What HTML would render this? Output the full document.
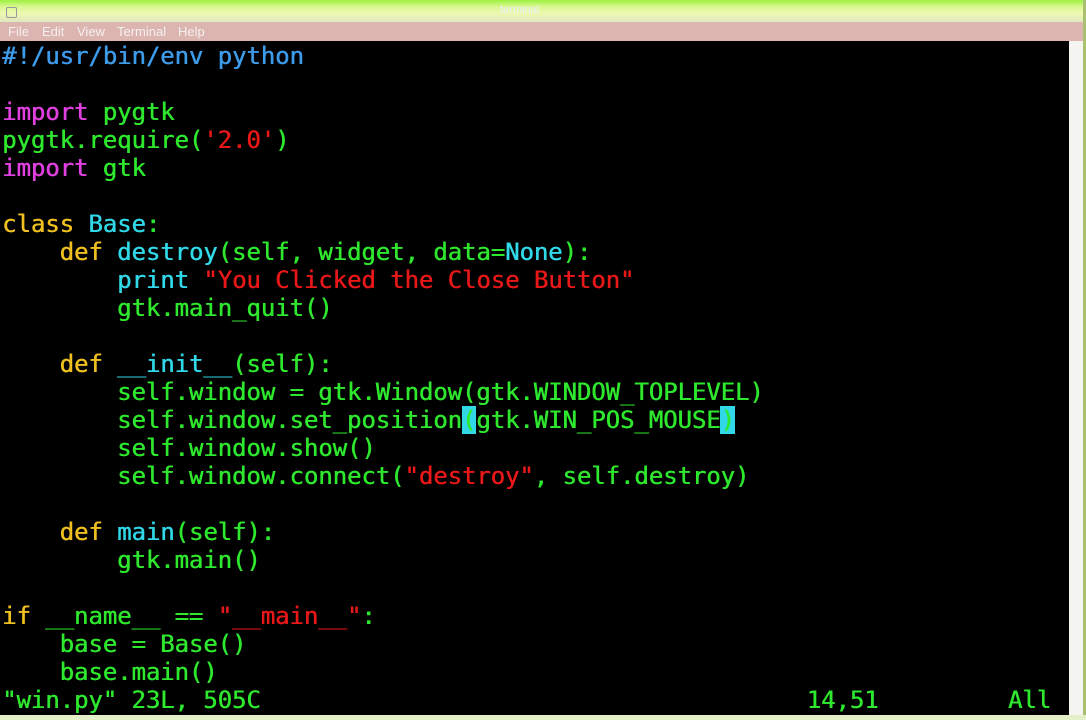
<!DOCTYPE html>
<html><head><meta charset="utf-8"><style>
html,body{margin:0;padding:0;width:1086px;height:720px;overflow:hidden;background:#e8f0d8}
#title{position:absolute;left:0;top:0;width:1086px;height:22px;background:linear-gradient(#9cf040 0,#d8f890 30%,#eef8b0 60%,#e0e8c0 100%)}
#menu{position:absolute;left:0;top:22px;width:1086px;height:19px;background:#dcb4b0;font:13px "Liberation Sans",sans-serif;color:#f4f0f0}
#menu span{position:absolute;top:2px}
#term{position:absolute;left:0;top:41px;width:1069px;height:674px;background:#000}
#sb{position:absolute;left:1069px;top:41px;width:14px;height:674px;background:#f4f4f0}
#rb{position:absolute;left:1083px;top:0;width:3px;height:720px;background:#a8c070}
#bot{position:absolute;left:0;top:715px;width:1086px;height:5px;background:#e4f0c8}
pre{margin:0;position:absolute;left:2px;top:42px;font:24px/28px "DejaVu Sans Mono","Liberation Mono",monospace;color:#2ee82e;letter-spacing:-0.08px;text-shadow:0.5px 0 0 currentColor}
.c{color:#3d9be9}.m{color:#e040e0}.y{color:#f0c020}.b{color:#30d8e8}.r{color:#e81818}
.hl{background:#30d8e8;color:#2ee82e}
</style></head><body>
<div id="title"><div style="position:absolute;left:6px;top:7px;width:9px;height:9px;border:1px solid #999;border-radius:2px"></div><div style="position:absolute;left:500px;top:4px;font:11px 'Liberation Sans',sans-serif;color:#eef">terminal</div></div>
<div id="menu"><span style="left:8px">File</span><span style="left:42px">Edit</span><span style="left:77px">View</span><span style="left:117px">Terminal</span><span style="left:178px">Help</span></div>
<div id="term"></div><div id="sb"></div><div id="rb"></div><div id="bot"></div>
<pre><span class="c">#!/usr/bin/env python</span>

<span class="m">import</span> pygtk
pygtk.require(<span class="r">'2.0'</span>)
<span class="m">import</span> gtk

<span class="y">class</span> <span class="b">Base</span>:
    <span class="y">def</span> <span class="b">destroy</span>(self, widget, data=<span class="b">None</span>):
        <span class="b">print</span> <span class="r">"You Clicked the Close Button"</span>
        gtk.main_quit()

    <span class="y">def</span> <span class="b">__init__</span>(self):
        self.window = gtk.Window(gtk.WINDOW_TOPLEVEL)
        self.window.set_position<span class="hl">(</span>gtk.WIN_POS_MOUSE<span class="hl">)</span>
        self.window.show()
        self.window.connect(<span class="r">"destroy"</span>, self.destroy)

    <span class="y">def</span> <span class="b">main</span>(self):
        gtk.main()

<span class="y">if</span> __name__ == <span class="r">"__main__"</span>:
    base = Base()
    base.main()
"win.py" 23L, 505C                                      14,51         All</pre>
</body></html>
